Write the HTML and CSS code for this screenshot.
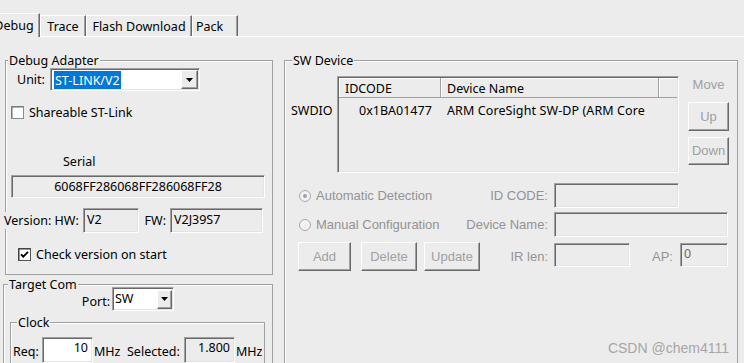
FILE: index.html
```html
<!DOCTYPE html>
<html>
<head>
<meta charset="utf-8">
<link rel="stylesheet" href="styles.css">
</head>
<body>
<div class="tabbar">
  <div class="tab tab-active tab-debug">Debug</div>
  <div class="tab tab-trace">Trace</div>
  <div class="tab tab-flash">Flash Download</div>
  <div class="tab tab-pack">Pack</div>
</div>
<div class="panel">
  <div class="leftcol">
    <div class="group g-adapter">
      <div class="legend lg-adapter">Debug Adapter</div>
      <div class="row r-unit">
        <span class="l-unit">Unit:</span>
        <div class="combo sunk c-unit">
          <span class="sel">ST-LINK/V2</span>
          <span class="dd raised"><svg width="7" height="4" viewBox="0 0 7 4"><path d="M0 0H7L3.5 4Z" fill="#000"/></svg></span>
        </div>
      </div>
      <div class="row chk r-share">
        <svg class="cb" width="13" height="13" viewBox="0 0 13 13"><rect x="0.5" y="0.5" width="12" height="12" fill="#fff" stroke="#8a8a8a"/><path d="M1 12V1H12" fill="none" stroke="#6a6a6a"/></svg>
        <span class="tx">Shareable ST-Link</span>
      </div>
      <div class="serial-lbl">Serial</div>
      <div class="field sunk f-serial"><span class="tx">6068FF286068FF286068FF28</span></div>
      <div class="row r-ver">
        <span class="l-ver">Version: HW:</span>
        <div class="field sunk f-hw">V2</div>
        <span class="l-fw">FW:</span>
        <div class="field sunk f-fw">V2J39S7</div>
      </div>
      <div class="row chk r-chkver">
        <svg class="cb" width="13" height="13" viewBox="0 0 13 13"><rect x="0.5" y="0.5" width="12" height="12" fill="#fff" stroke="#555"/><path d="M1 12V1H12" fill="none" stroke="#333"/><path d="M3 6.3 L5.3 8.6 L10 3.8" fill="none" stroke="#000" stroke-width="1.9"/></svg>
        <span class="tx">Check version on start</span>
      </div>
    </div>
    <div class="group g-target">
      <div class="legend lg-target">Target Com</div>
      <div class="row r-port">
        <span class="l-port">Port:</span>
        <div class="combo sunk c-port">
          <span class="cval">SW</span>
          <span class="dd dd-sm raised"><svg width="7" height="4" viewBox="0 0 7 4"><path d="M0 0H7L3.5 4Z" fill="#000"/></svg></span>
        </div>
      </div>
      <div class="group g-clock">
        <div class="legend lg-clock">Clock</div>
        <div class="row r-req">
          <span class="l-req">Req:</span>
          <div class="field sunk f-req">10</div>
          <span class="mhz">MHz</span>
          <span class="l-sel">Selected:</span>
          <div class="field sunk f-selv">1.800</div>
          <span class="mhz2">MHz</span>
        </div>
      </div>
    </div>
  </div>
  <div class="group g-sw">
    <div class="legend lg-sw">SW Device</div>
    <div class="row r-dev">
      <div class="swdio">SWDIO</div>
      <div class="table sunk">
        <div class="thead">
          <div class="th th-id">IDCODE</div>
          <div class="th th-name">Device Name</div>
          <div class="th th-rest"></div>
        </div>
        <div class="tr">
          <div class="td-id">0x1BA01477</div>
          <div class="td-name">ARM CoreSight SW-DP (ARM Core</div>
        </div>
      </div>
      <div class="move-col">
        <div class="move-lbl">Move</div>
        <div class="btn raised b-up">Up</div>
        <div class="btn raised b-down">Down</div>
      </div>
    </div>
    <div class="opt-row r-auto">
      <div class="opt-left dis">
        <svg class="radio" width="12" height="12" viewBox="0 0 12 12"><circle cx="6" cy="6" r="5.5" fill="#f2f2f2" stroke="#a8a8a8"/><circle cx="6" cy="6" r="2" fill="#a0a0a0"/></svg>
        <span>Automatic Detection</span>
      </div>
      <span class="opt-lab dis">ID CODE:</span>
      <div class="field sunk f-idcode"></div>
    </div>
    <div class="opt-row r-man">
      <div class="opt-left dis">
        <svg class="radio" width="12" height="12" viewBox="0 0 12 12"><circle cx="6" cy="6" r="5.5" fill="#f2f2f2" stroke="#a8a8a8"/></svg>
        <span>Manual Configuration</span>
      </div>
      <span class="opt-lab dis">Device Name:</span>
      <div class="field sunk f-devname"></div>
    </div>
    <div class="opt-row r-btns">
      <div class="btn raised b-add">Add</div>
      <div class="btn raised b-del">Delete</div>
      <div class="btn raised b-upd">Update</div>
      <span class="l-ir dis">IR len:</span>
      <div class="field sunk f-ir"></div>
      <span class="l-ap dis">AP:</span>
      <div class="field sunk f-ap">0</div>
    </div>
  </div>
</div>
<div class="wm">CSDN @chem4111</div>
</body>
</html>
```
FILE: styles.css
```css
* { box-sizing: border-box; }
html, body { margin: 0; padding: 0; }
body {
  width: 744px; height: 363px; overflow: hidden;
  background: #ececec;
  font-family: "Noto Sans", "DejaVu Sans", sans-serif;
  font-size: 12.5px; line-height: 16px; color: #000;
  position: relative;
}
.sunk {
  border: 1px solid; border-color: #a0a0a0 #fff #fff #a0a0a0;
  box-shadow: inset 1px 1px 0 #696969, inset -1px -1px 0 #e3e3e3;
}
.raised {
  border: 1px solid; border-color: #fff #696969 #696969 #fff;
  box-shadow: inset -1px -1px 0 #a0a0a0;
  background: #ececec;
}
.tx { padding-top: 1px; }
/* tabs */
.tabbar { display: flex; align-items: flex-end; height: 36px; margin-left: -12px; position: relative; z-index: 2; }
.tab {
  height: 21px; display: flex; align-items: center; justify-content: center;
  border-top: 1px solid #fff; border-left: 1px solid #fff; border-right: 1px solid #696969;
  box-shadow: inset -1px 0 0 #a0a0a0; background: #ececec; white-space: nowrap; padding-top: 1px;
}
.tab-active { height: 24px; margin-bottom: -1px; padding-top: 0; }
.tab-debug { width: 52px; }
.tab-trace { width: 46px; }
.tab-flash { width: 106px; }
.tab-pack { width: 46px; justify-content: flex-start; padding-left: 3px; }
.panel { display: flex; border-top: 1px solid #fff; padding-left: 3px; position: relative; z-index: 1; }
.leftcol { width: 269px; padding-top: 23px; display: flex; flex-direction: column; flex: none; }
.group { border: 1px solid #a0a0a0; box-shadow: inset 1px 1px 0 #fff; flex: none; }
.legend { display: block; width: max-content; height: 14px; line-height: 14px; margin-top: -8px; padding: 1px 1px 0; background: #ececec; }
.row { display: flex; align-items: center; }
/* debug adapter */
.g-adapter { margin-left: 2px; width: 268px; height: 215px; }
.lg-adapter { margin-left: 2px; }
.r-unit { height: 23px; margin-top: 1px; margin-left: 11px; }
.l-unit { width: 33px; padding-top: 1px; }
.combo { display: flex; align-items: center; justify-content: space-between; background: #fff; height: 23px; padding: 1px 1px 1px 3px; }
.c-unit { width: 150px; }
.sel { background: #0078d7; color: #fff; height: 18px; line-height: 19px; padding: 0 1px; }
.dd { width: 17px; height: 19px; display: flex; align-items: center; justify-content: center; }
.dd-sm { width: 15px; }
.dd svg { display: block; }
.chk { height: 16px; }
.cb { display: block; margin-right: 5px; flex: none; }
.r-share { margin-top: 13px; margin-left: 5px; }
.serial-lbl { margin-top: 35px; margin-left: 57px; height: 14px; line-height: 14px; }
.field { height: 23px; display: flex; align-items: center; padding: 0 3px; background: #ececec; white-space: nowrap; }
.f-serial { margin-top: 6px; margin-left: 5px; width: 254px; justify-content: center; }
.r-ver { margin-top: 10px; height: 25px; margin-left: -2px; }
.l-ver { width: 79px; background: #ececec; padding-top: 1px; }
.f-hw { width: 56px; height: 25px; align-items: flex-start; padding-top: 3px; }
.l-fw { width: 31px; text-align: right; padding-right: 4px; padding-top: 1px; }
.f-fw { width: 93px; height: 25px; align-items: flex-start; padding-top: 3px; }
.r-chkver { margin-top: 13px; margin-left: 12px; }
/* target com */
.g-target { width: 270px; height: 200px; margin-top: 9px; }
.lg-target { margin-left: 4px; }
.r-port { height: 24px; margin-top: -4px; }
.l-port { width: 106px; text-align: right; padding-top: 6px; }
.c-port { width: 62px; margin-left: 2px; height: 24px; padding-left: 2px; }
.g-clock { margin-left: 6px; width: 255px; height: 60px; margin-top: 11px; }
.lg-clock { margin-left: 6px; }
.r-req { height: 26px; margin-top: 8px; }
.l-req { width: 29px; margin-left: 2px; padding-top: 4px; }
.f-req { width: 51px; height: 26px; background: #fff; justify-content: flex-end; align-items: flex-start; padding: 2px 4px 0 0; }
.mhz { margin-left: 1px; width: 33px; padding-top: 4px; }
.l-sel { width: 57px; padding-top: 4px; }
.f-selv { width: 51px; height: 26px; justify-content: flex-end; align-items: flex-start; padding: 2px 4px 0 0; }
.mhz2 { margin-left: 1px; padding-top: 4px; }
/* sw device */
.g-sw { margin-left: 12px; margin-top: 23px; width: 454px; height: 305px; }
.lg-sw { margin-left: 7px; }
.r-dev { margin-top: 9px; height: 97px; align-items: flex-start; }
.swdio { width: 46px; margin-left: 6px; padding-top: 27px; }
.table { width: 342px; height: 97px; display: flex; flex-direction: column; padding: 1px; background: #ececec; }
.thead { display: flex; height: 20px; flex: none; }
.th { height: 20px; border-right: 1px solid #a0a0a0; border-bottom: 1px solid #a0a0a0; box-shadow: inset 1px 1px 0 #fff; padding: 3px 0 0 6px; line-height: 16px; white-space: nowrap; }
.th-id { width: 102px; }
.th-name { width: 218px; }
.th-rest { flex: 1; border-right: none; }
.tr { display: flex; padding-top: 5px; line-height: 16px; }
.td-id { width: 102px; padding-left: 20px; }
.td-name { width: 218px; padding-left: 6px; white-space: nowrap; overflow: hidden; letter-spacing: 0.1px; }
.move-col { margin-left: 9px; width: 41px; display: flex; flex-direction: column; }
.move-lbl { margin-top: 1px; text-align: center; color: #a0a0a0; font-family: "Liberation Sans", Arial, sans-serif; font-size: 13px; line-height: 16px; }
.btn { display: flex; align-items: center; justify-content: center; color: #a0a0a0; font-family: "Liberation Sans", Arial, sans-serif; font-size: 13px; }
.b-up { margin-top: 9px; height: 29px; }
.b-down { margin-top: 6px; height: 28px; }
.opt-row { display: flex; align-items: center; height: 25px; }
.r-auto { margin-top: 10px; }
.r-man { margin-top: 4px; }
.r-btns { margin-top: 5px; height: 29px; padding-left: 13px; }
.opt-left { width: 175px; padding-left: 14px; display: flex; align-items: center; white-space: nowrap; }
.radio { display: block; margin-right: 5px; flex: none; }
.dis { color: #939393; font-family: "Liberation Sans", Arial, sans-serif; font-size: 13px; }
.opt-lab { width: 88px; text-align: right; white-space: nowrap; }
.f-idcode { margin-left: 6px; width: 125px; height: 25px; }
.f-devname { margin-left: 6px; width: 174px; height: 25px; }
.b-add { width: 53px; height: 29px; }
.b-del { width: 56px; height: 29px; margin-left: 10px; }
.b-upd { width: 56px; height: 29px; margin-left: 7px; }
.l-ir { width: 68px; text-align: right; }
.f-ir { margin-left: 6px; width: 76px; height: 24px; align-self: flex-start; margin-top: 1px; }
.l-ap { width: 43px; text-align: right; }
.f-ap { margin-left: 7px; width: 48px; height: 24px; align-self: flex-start; margin-top: 1px; align-items: flex-start; padding-top: 2px; color: #7a6a50; }
.wm { position: absolute; right: 15px; top: 340px; font-family: "Liberation Sans", Arial, sans-serif; font-size: 14px; line-height: 16px; color: #a6a6a6; z-index: 3; }
```
